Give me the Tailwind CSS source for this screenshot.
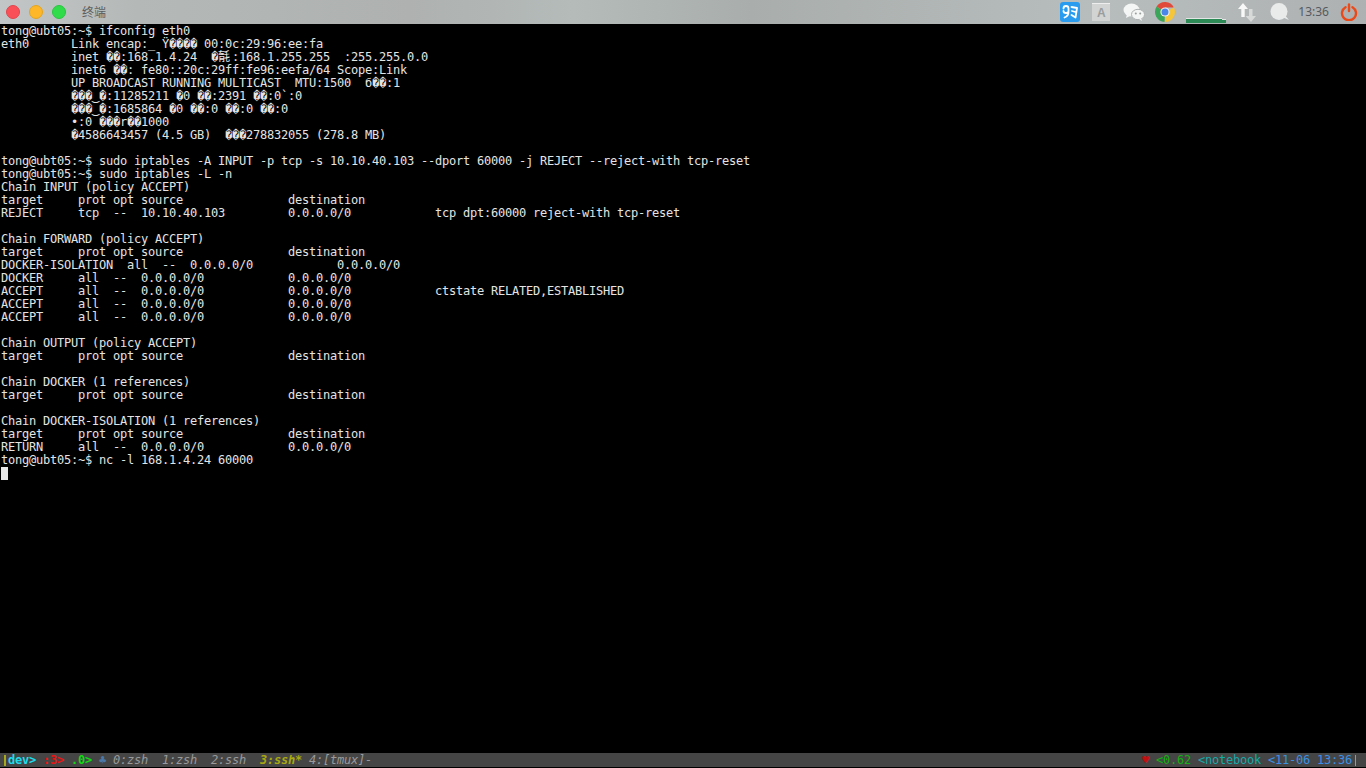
<!DOCTYPE html>
<html lang="en">
  <head>
    <meta charset="UTF-8" />
    <meta name="viewport" content="width=device-width, initial-scale=1.0" />
    <script src="https://cdn.jsdelivr.net/npm/@tailwindcss/browser@4"></script>
    <title>终端</title>
  </head>
  <body class="flex flex-col w-full h-screen overflow-hidden bg-black">
    <!-- top bar -->
    <header class="flex items-center h-6 shrink-0 bg-[linear-gradient(90deg,#c3c6c6_0%,#b4b9b8_10%,#aeb1b0_30%,#b4bbb9_42%,#a9aeac_55%,#b7bdbd_80%,#aeb1b1_100%)]">
      <div class="flex items-center gap-[9px] ml-[6px]">
        <span class="w-[14px] h-[14px] rounded-full bg-[#fb4f58] border border-[#e0454c]"></span>
        <span class="w-[14px] h-[14px] rounded-full bg-[#fdb728] border border-[#e3a522]"></span>
        <span class="w-[14px] h-[14px] rounded-full bg-[#30dc4a] border border-[#2ac441]"></span>
      </div>
      <span class="ml-[16px] text-[12px] text-[#5c5f60] font-['Noto_Sans_CJK_SC',sans-serif]">终端</span>

      <div class="flex items-center ml-auto h-6">
        <!-- blue app -->
        <svg width="20" height="20" viewBox="0 0 20 20" class="mr-[12px]">
          <rect width="20" height="20" rx="3" fill="#2a9cf0" />
          <path d="M3.5 6.5Q3.5 4 6 4T8.5 6.5V9Q8.5 11 6 11T3.5 9 M8.5 10Q8.5 14 4.5 15.5 M11.5 5L17 6L15.5 15.5L11.5 13 M12 9L15.5 10" fill="none" stroke="#fff" stroke-width="1.8" stroke-linecap="round" stroke-linejoin="round" />
        </svg>
        <!-- A box -->
        <div class="flex items-center justify-center w-[18px] h-[18px] mr-[13px] bg-[#d2d3d3] border-t border-t-[#eeeeee] text-[12px] font-bold text-[#9a9d9d] font-['Liberation_Sans',sans-serif]">A</div>
        <!-- wechat -->
        <svg width="22" height="18" viewBox="0 0 22 18" class="mr-[10px]">
          <ellipse cx="8.5" cy="7" rx="8" ry="6.5" fill="#f4f5f5" />
          <path d="M4 11l-1 4 4-2z" fill="#f4f5f5" />
          <ellipse cx="15" cy="11.5" rx="6.5" ry="5.2" fill="#f4f5f5" stroke="#aeb1b1" stroke-width="1" />
          <path d="M18 15l1 3-3-2z" fill="#f4f5f5" />
          <circle cx="12.8" cy="10.5" r="1" fill="#9a9d9d" />
          <circle cx="17.2" cy="10.5" r="1" fill="#9a9d9d" />
        </svg>
        <!-- chrome -->
        <svg width="20" height="20" viewBox="0 0 20 20" class="mr-[11px]">
          <path d="M10 10L1.6 4.6A10 10 0 0 1 18.9 5.5H10z" fill="#e04a3a" />
          <path d="M10 10L18.9 5.5A10 10 0 0 1 9.5 20z" fill="#f5c53a" />
          <path d="M10 10L9.5 20A10 10 0 0 1 1.6 4.6z" fill="#3ba55a" />
          <circle cx="10" cy="10" r="4.6" fill="#f1f1f1" />
          <circle cx="10" cy="10" r="3.5" fill="#4a86e8" />
        </svg>
        <!-- net graph -->
        <div class="flex items-end self-end w-[40px] h-[5px] mb-px mr-[12px]">
          <div class="w-[36px] h-[5px] bg-[#2c8a55] border-t border-t-[#e2e6e4]"></div>
          <div class="w-[4px] h-[4px] bg-[#2c8a55] border-t border-t-[#e2e6e4]"></div>
        </div>
        <!-- up/down arrows -->
        <svg width="18" height="20" viewBox="0 0 18 20" class="mr-[14px]">
          <path d="M13 20L7.5 14H11V7H14.5V14H18z" fill="#d8dada" />
          <path d="M5 1L0 7H3.3V15H6.7V7H10z" fill="#f8f8f8" />
        </svg>
        <!-- bubble -->
        <svg width="19" height="18" viewBox="0 0 19 18" class="mr-[9px]">
          <circle cx="9" cy="8.5" r="8.5" fill="#e9ebeb" />
          <path d="M12 14l7 3-6-7z" fill="#e9ebeb" />
        </svg>
        <span class="mr-[11px] text-[12px] text-[#555a60] font-['Noto_Sans',sans-serif]">13:36</span>
        <!-- power -->
        <svg width="18" height="18" viewBox="0 0 18 18" class="mr-[8px]">
          <path d="M5.5 4.2A7 7 0 1 0 12.5 4.2" fill="none" stroke="#ea4a1a" stroke-width="2.4" stroke-linecap="round" />
          <path d="M9 1.5V8" fill="none" stroke="#ea4a1a" stroke-width="2.4" stroke-linecap="round" />
        </svg>
      </div>
    </header>

    <!-- terminal -->
    <main class="flex-1 pl-px pt-px text-[12px] leading-[13px] tracking-[-0.225px] text-[#e4e4e4] font-['DejaVu_Sans_Mono','Noto_Sans_CJK_SC',monospace]">
      <pre class="font-['DejaVu_Sans_Mono','Noto_Sans_CJK_SC',monospace]">tong@ubt05:~$ ifconfig eth0
eth0      Link encap:_ Ÿ���� 00:0c:29:96:ee:fa
          inet ��:168.1.4.24  �<span class="tracking-[2px]">毻</span>:168.1.255.255  :255.255.0.0
          inet6 ��: fe80::20c:29ff:fe96:eefa/64 Scope:Link
          UP BROADCAST RUNNING MULTICAST  MTU:1500  б��:1
          ���‿�:11285211 �0 ��:2391 ��:0`:0
          ���‿�:1685864 �0 ��:0 ��:0 ��:0
          •:0 ���r��1000
          �4586643457 (4.5 GB)  ���278832055 (278.8 MB)

tong@ubt05:~$ sudo iptables -A INPUT -p tcp -s 10.10.40.103 --dport 60000 -j REJECT --reject-with tcp-reset
tong@ubt05:~$ sudo iptables -L -n
Chain INPUT (policy ACCEPT)
target     prot opt source               destination
REJECT     tcp  --  10.10.40.103         0.0.0.0/0            tcp dpt:60000 reject-with tcp-reset

Chain FORWARD (policy ACCEPT)
target     prot opt source               destination
DOCKER-ISOLATION  all  --  0.0.0.0/0            0.0.0.0/0
DOCKER     all  --  0.0.0.0/0            0.0.0.0/0
ACCEPT     all  --  0.0.0.0/0            0.0.0.0/0            ctstate RELATED,ESTABLISHED
ACCEPT     all  --  0.0.0.0/0            0.0.0.0/0
ACCEPT     all  --  0.0.0.0/0            0.0.0.0/0

Chain OUTPUT (policy ACCEPT)
target     prot opt source               destination

Chain DOCKER (1 references)
target     prot opt source               destination

Chain DOCKER-ISOLATION (1 references)
target     prot opt source               destination
RETURN     all  --  0.0.0.0/0            0.0.0.0/0
tong@ubt05:~$ nc -l 168.1.4.24 60000
<span class="inline-block w-[7px] h-[13px] bg-[#e8e8e8] align-top"></span></pre>
    </main>

    <!-- tmux status line -->
    <footer class="flex items-center justify-between h-[14px] mb-px shrink-0 bg-[#454545] text-[12px] leading-[14px] tracking-[-0.225px] font-['DejaVu_Sans_Mono',monospace]">
      <div class="flex items-center">
        <span class="w-[2px] h-[11px] ml-[4px] mr-[2px] bg-[#a8a81c]"></span>
        <pre class="font-['DejaVu_Sans_Mono',monospace]"><span class="font-bold text-[#1cdcec]">dev&gt;</span> <span class="font-bold text-[#e81414]">:3&gt;</span> <span class="font-bold text-[#14d814]">.0&gt;</span> <span class="text-[#4a78a8]">♣</span> <span class="italic text-[#9a9a9a]">0:zsh  1:zsh  2:ssh</span>  <span class="italic font-bold text-[#a8a810]">3:ssh*</span> <span class="italic text-[#9a9a9a]">4:[tmux]-</span></pre>
      </div>
      <div class="flex items-center">
        <pre class="font-['DejaVu_Sans_Mono',monospace]"><span class="text-[#c01010]">♥</span> <span class="text-[#14b014]">&lt;0.62</span> <span class="text-[#18a8a8]">&lt;notebook</span> <span class="text-[#3a90e4]">&lt;11-06 13:36</span></pre>
        <span class="w-px h-[11px] ml-[3px] mr-[10px] bg-[#a8a81c]"></span>
      </div>
    </footer>
  </body>
</html>
